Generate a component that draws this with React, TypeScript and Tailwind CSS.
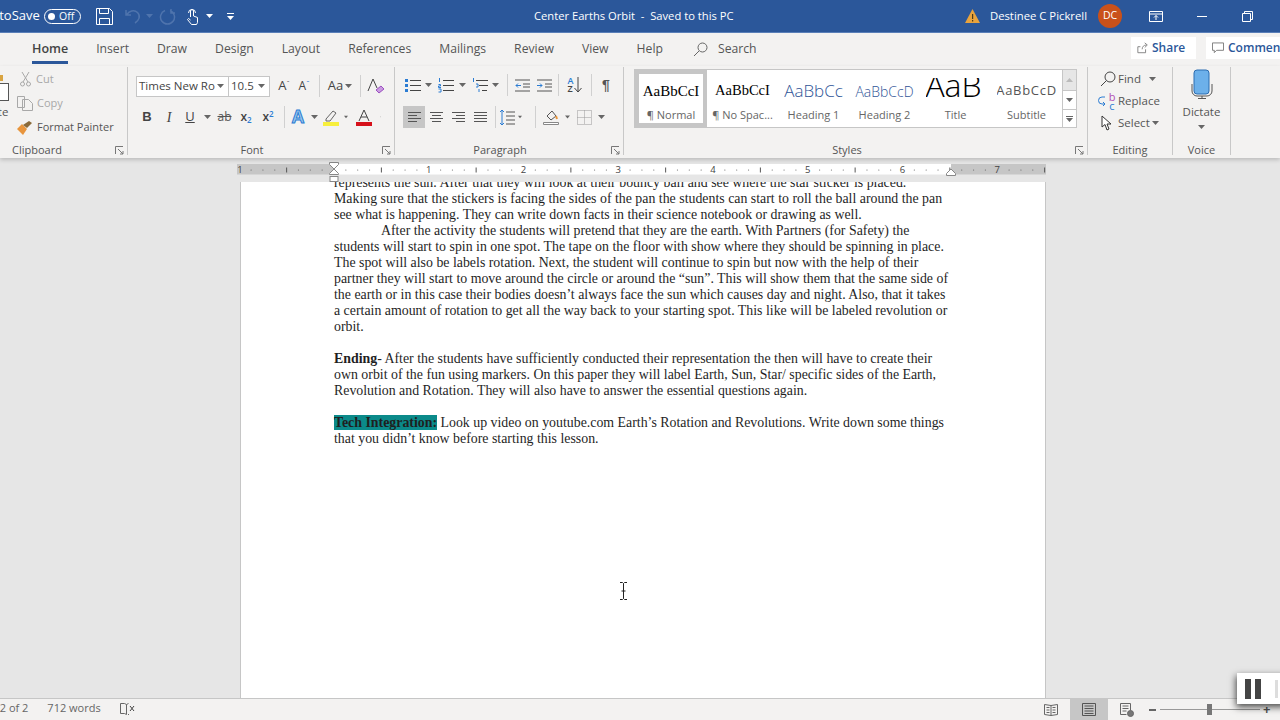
import type { ReactNode } from "react";

const ui = "font-['Open_Sans','Noto_Sans',sans-serif]";

const Caret = ({ className = "text-[#666]" }: { className?: string }) => (
  <svg width="7" height="4" viewBox="0 0 7 4" className={className}>
    <path d="M0 0h7L3.5 4z" fill="currentColor" />
  </svg>
);

const Launcher = () => (
  <svg width="9" height="9" viewBox="0 0 9 9" fill="none" stroke="#777">
    <path d="M.5 8V.5H8" />
    <path d="M3 3l5 5M8 5v3H5" />
  </svg>
);

const Divider = () => <div className="w-px h-[88px] bg-[#c8c8c8] shrink-0" />;
const Sep = () => <div className="w-px h-[22px] bg-[#d0d0d0] shrink-0" />;

const Cell = ({ w, children, active }: { w: number; children?: ReactNode; active?: boolean }) => (
  <div
    className={`h-[22px] flex items-center justify-center shrink-0 ${active ? "bg-[#c6c6c6]" : ""}`}
    style={{ width: w }}
  >
    {children}
  </div>
);

const GroupLabel = ({ label, launcher, pr = 0 }: { label: string; launcher?: boolean; pr?: number }) => (
  <div
    className="relative h-[18px] flex items-center justify-center text-[11px] text-[#555]"
    style={{ paddingRight: pr }}
  >
    {label}
    {launcher && (
      <span className="absolute right-[3px] top-[5px] flex">
        <Launcher />
      </span>
    )}
  </div>
);

const Lines = ({ d, color = "#555" }: { d: string; color?: string }) => (
  <svg width="15" height="14" viewBox="0 0 15 14" fill="none" stroke={color}>
    <path d={d} />
  </svg>
);

const BulletIcon = () => (
  <svg width="16" height="15" viewBox="0 0 16 15" fill="none">
    <path d="M5 2.5h11M5 7.5h11M5 12.5h11" stroke="#444" />
    <path d="M0 1h3v3H0zM0 6h3v3H0zM0 11h3v3H0z" fill="#2b7cd3" />
  </svg>
);
const NumberIcon = () => (
  <svg width="16" height="15" viewBox="0 0 16 15" fill="none">
    <path d="M5 2.5h11M5 7.5h11M5 12.5h11" stroke="#444" />
    <path d="M1.5 0v4M.5 6.5h2V8h-2v1.5H3M.5 11H3v3H.5" stroke="#2b7cd3" />
  </svg>
);
const MultiIcon = () => (
  <svg width="16" height="15" viewBox="0 0 16 15" fill="none">
    <path d="M4 2.5h12M7 7.5h9M10 12.5h5" stroke="#444" />
    <path d="M1.5 0v4M4 6h2v3H4M7 11v3" stroke="#2b7cd3" />
  </svg>
);
const IndentIcon = ({ out }: { out?: boolean }) => (
  <svg width="15" height="13" viewBox="0 0 15 13" fill="none">
    <path d="M0 1h15M8 5h7M8 8h7M0 12h15" stroke="#555" />
    <path d={out ? "M6 6.5H1M3 4.5l-2 2 2 2" : "M0 6.5h5M3 4.5l2 2-2 2"} stroke="#2b7cd3" />
  </svg>
);

const titleLeft = (
  <div className="flex items-center">
    <span className="ml-[-17px] w-[54px] text-[13px] text-white whitespace-nowrap">AutoSave</span>
    <div className="ml-[7px] w-[37px] h-[15px] rounded-full border border-white flex items-center">
      <span className="ml-[3px] w-[7px] h-[7px] rounded-full bg-white" />
      <span className="ml-[4px] text-[10.5px] leading-none text-white">Off</span>
    </div>
    <svg width="17" height="17" viewBox="0 0 17 17" fill="none" stroke="white" className="ml-[15px]">
      <path d="M.5.5h13l3 3v13H.5z" />
      <path d="M3.5.5v5h9v-5M3.5 16.5v-6h10v6" />
    </svg>
    <svg width="16" height="15" viewBox="0 0 16 15" fill="none" stroke="#4f74ad" strokeWidth="1.5" className="ml-[12px]">
      <path d="M1 1v5h5M1.5 6C4 2 9 0 12.5 3.5s1.500 8-2.500 10.500" />
    </svg>
    <span className="ml-[5px] flex"><Caret className="text-[#4f74ad]" /></span>
    <svg width="17" height="17" viewBox="0 0 17 17" fill="none" stroke="#4f74ad" strokeWidth="1.5" className="ml-[6px]">
      <path d="M6 2.5a7 7 0 1 0 5 0M12 1v4h4" />
    </svg>
    <svg width="13" height="17" viewBox="0 0 13 17" fill="none" stroke="white" className="ml-[10px]">
      <path d="M4.5 9V3a1.500 1.500 0 0 1 3 0v5l4 1.500v5l-1 2h-5l-4-5 1-1 2 1.500" />
      <path d="M2.5 5a3.500 3.500 0 0 1 7 0" />
    </svg>
    <span className="ml-[7px] flex"><Caret className="text-white" /></span>
    <svg width="7" height="7" viewBox="0 0 7 7" className="ml-[14px]">
      <path d="M0 0h7v1H0zM0 3h7L3.5 7z" fill="white" />
    </svg>
  </div>
);

const TitleBar = () => (
  <div className="h-[33px] bg-[#2b579a] border-b border-[#5a7fb8] flex items-center relative shrink-0 overflow-hidden">
    {titleLeft}
    <span className="absolute left-[534px] top-[10px] text-[11.2px] leading-none text-white whitespace-pre">
      Center Earths Orbit  -  Saved to this PC
    </span>
    <div className="ml-auto flex items-center mr-[27px]">
      <svg width="15" height="14" viewBox="0 0 15 14">
        <path d="M7.5 0L15 14H0z" fill="#e8a33d" />
        <path d="M7 5h1.200v5H7zM7 11h1.200v1.500H7z" fill="#4a3a1a" />
      </svg>
      <span className="ml-[10px] text-[11.3px] text-white whitespace-nowrap">Destinee C Pickrell</span>
      <span className="ml-[11px] w-[24px] h-[24px] rounded-full bg-[#c9511a] text-[10.5px] text-white flex items-center justify-center">
        DC
      </span>
      <svg width="14" height="11" viewBox="0 0 14 11" fill="none" stroke="white" className="ml-[27px]">
        <path d="M.5.5h13v10H.5zM.5 3h13M7 9V4.500M5 6.500l2-2 2 2" />
      </svg>
      <span className="ml-[34px] w-[10px] h-px bg-white" />
      <svg width="11" height="11" viewBox="0 0 11 11" fill="none" stroke="white" className="ml-[35px]">
        <path d="M.5 2.500h8v8h-8zM2.500 2.500v-2h8v8h-2" />
      </svg>
    </div>
  </div>
);

const tabs = ["Insert", "Draw", "Design", "Layout", "References", "Mailings", "Review", "View", "Help"];

const TabRow = () => (
  <div className="h-[33px] flex items-center pl-[32px] gap-[28px] text-[12.2px] text-[#555] relative shrink-0">
    <div className="relative h-full flex items-center font-semibold text-[12.5px] text-[#444]">
      Home
      <span className="absolute left-0 right-0 bottom-[2px] h-[3px] bg-[#2b579a]" />
    </div>
    {tabs.map((t) => (
      <span key={t}>{t}</span>
    ))}
    <div className="flex items-center ml-[2px]">
      <svg width="15" height="15" viewBox="0 0 15 15" fill="none" stroke="#666">
        <circle cx="9.5" cy="5.5" r="4.5" />
        <path d="M6 9l-5 5" />
      </svg>
      <span className="ml-[10px]">Search</span>
    </div>
    <div className="absolute left-[1131px] top-[4px] w-[65px] h-[22px] bg-white flex items-center pl-[6px] gap-[3px] text-[12px] text-[#2b579a] font-semibold">
      <svg width="12" height="12" viewBox="0 0 14 13" fill="none" stroke="#777">
        <path d="M1 5v7h9V8M1 5h3M6 8c0-3 2-5 5-5M9 .5L12 3 9 6" />
      </svg>
      Share
    </div>
    <div className="absolute left-[1206px] top-[4px] w-[90px] h-[22px] bg-white flex items-center pl-[6px] gap-[4px] text-[12px] text-[#2b579a] font-semibold whitespace-nowrap">
      <svg width="12" height="12" viewBox="0 0 13 12" fill="none" stroke="#777">
        <path d="M.5.5h12v8H5L2.500 11V8.500h-2z" />
      </svg>
      Comments
    </div>
  </div>
);

const Clipboard = () => (
  <div className="w-[127px] shrink-0 flex flex-col relative">
    <div className="h-[70px] text-[11px] relative">
      <div className="absolute left-[-4px] top-[17px] w-[13px] h-[18px] bg-white border border-[#555]" />
      <span className="absolute left-[-5px] top-[9px] w-[8px] h-[6px] bg-[#d9a441]" />
      <span className="absolute left-[-21px] top-[37px] text-[11.5px] text-[#555]">Paste</span>
      <div className="pl-[20px] pt-[2px] flex flex-col gap-[2px]">
        <div className="h-[22px] flex items-center text-[#a8a8a8]">
          <svg width="11" height="15" viewBox="0 0 11 15" fill="none" stroke="#a8a8a8">
            <path d="M2 0l6 10M9 0L3 10" />
            <circle cx="2.5" cy="12" r="2" />
            <circle cx="8.5" cy="12" r="2" />
          </svg>
          <span className="ml-[5px]">Cut</span>
        </div>
        <div className="h-[22px] flex items-center text-[#a8a8a8] ml-[-3px]">
          <svg width="16" height="15" viewBox="0 0 16 15" fill="none" stroke="#a8a8a8">
            <path d="M.5.5h7v11h-7zM5.500 3.500h6l4 4v7h-10z" />
          </svg>
          <span className="ml-[4px]">Copy</span>
        </div>
        <div className="h-[22px] flex items-center text-[#555] ml-[-3px]">
          <svg width="16" height="15" viewBox="0 0 16 15">
            <path d="M0 9l5-5 5 5-4 6z" fill="#e8953d" />
            <path d="M6 5l6-4 3 2-5 5z" fill="#8a6a3a" />
          </svg>
          <span className="ml-[4px]">Format Painter</span>
        </div>
      </div>
    </div>
    <div className="mt-[5px]">
      <GroupLabel label="Clipboard" launcher pr={53} />
    </div>
  </div>
);

const FontGroup = () => (
  <div className="w-[266px] shrink-0 flex flex-col">
    <div className="h-[75px] pl-[8px] pt-[9px] flex flex-col gap-[9px]">
      <div className="flex items-center h-[22px]">
        <div className="w-[93px] h-[21px] bg-white border border-[#c6c6c6] flex items-center pl-[2px] pr-[4px] justify-between text-[11.5px] text-[#444] whitespace-nowrap overflow-hidden">
          Times New Ro
          <Caret />
        </div>
        <div className="w-[42px] h-[21px] ml-[-1px] bg-white border border-[#c6c6c6] flex items-center pl-[2px] pr-[4px] justify-between text-[11.5px] text-[#444]">
          10.5
          <Caret />
        </div>
        <div className="w-[4px]" />
        <Cell w={20}>
          <span className="text-[13px] text-[#444]">A<sup className="text-[8px] text-[#666]">ˆ</sup></span>
        </Cell>
        <Cell w={20}>
          <span className="text-[12px] text-[#444]">A<sup className="text-[8px] text-[#2b7cd3]">ˇ</sup></span>
        </Cell>
        <div className="w-[5px]" />
        <Sep />
        <div className="w-[40px] flex items-center justify-center gap-[2px] text-[13px] text-[#444]">
          Aa
          <Caret />
        </div>
        <Sep />
        <Cell w={30}>
          <svg width="18" height="17" viewBox="0 0 18 17" fill="none">
            <path d="M1 13L6 1l4 9" stroke="#444" />
            <path d="M9 12l5-4 3 3-5 4z" fill="#c99be0" stroke="#9b4fc0" />
          </svg>
        </Cell>
      </div>
      <div className="flex items-center h-[22px] text-[#444]">
        <Cell w={22}>
          <span className="font-['Liberation_Sans',sans-serif] font-bold text-[13px]">B</span>
        </Cell>
        <Cell w={22}>
          <span className="font-['Liberation_Serif',serif] italic text-[14px]">I</span>
        </Cell>
        <Cell w={20}>
          <span className="underline text-[13px]">U</span>
        </Cell>
        <Cell w={14}><Caret /></Cell>
        <Cell w={21}>
          <span className="line-through text-[12px] text-[#555]">ab</span>
        </Cell>
        <Cell w={22}>
          <span className="font-semibold text-[12px]">x<sub className="text-[8px] text-[#2b7cd3]">2</sub></span>
        </Cell>
        <Cell w={22}>
          <span className="font-semibold text-[12px]">x<sup className="text-[8px] text-[#2b7cd3]">2</sup></span>
        </Cell>
        <div className="w-[5px]" />
        <Sep />
        <Cell w={26}>
          <span className="font-['Liberation_Sans',sans-serif] font-bold text-[18px] text-[#9cc9ee] [-webkit-text-stroke:1px_#2b7cd3]">A</span>
        </Cell>
        <Cell w={7}><Caret /></Cell>
        <Cell w={26}>
          <svg width="16" height="17" viewBox="0 0 16 17" fill="none">
            <path d="M3 10l7-8 3 2-6 8H3z" stroke="#666" />
            <rect x="0" y="13" width="16" height="4" fill="#f7ef3c" />
          </svg>
        </Cell>
        <Cell w={4}><Caret /></Cell>
        <Cell w={32}>
          <svg width="16" height="17" viewBox="0 0 16 17" fill="none">
            <path d="M3 12L8 1l5 11M5 8h6" stroke="#444" />
            <rect x="0" y="13" width="16" height="4" fill="#d6111b" />
          </svg>
        </Cell>
        <Cell w={1}><Caret /></Cell>
      </div>
    </div>
    <div>
      <GroupLabel label="Font" launcher pr={18} />
    </div>
  </div>
);

const ParagraphGroup = () => (
  <div className="w-[228px] shrink-0 flex flex-col">
    <div className="h-[75px] flex flex-col">
      <div className="flex items-center h-[22px] mt-[8px] pl-[9px]">
        <Cell w={17}><BulletIcon /></Cell>
        <Cell w={15}><Caret /></Cell>
        <Cell w={19}><NumberIcon /></Cell>
        <Cell w={15}><Caret /></Cell>
        <Cell w={19}><MultiIcon /></Cell>
        <Cell w={13}><Caret /></Cell>
        <div className="w-[5px]" />
        <Sep />
        <Cell w={28}><IndentIcon out /></Cell>
        <Cell w={16}><IndentIcon /></Cell>
        <div className="w-[6px]" />
        <Sep />
        <Cell w={32}>
          <span className="flex items-center">
            <span className="flex flex-col text-[9px] leading-[8px] font-semibold">
              <span className="text-[#2b7cd3]">A</span>
              <span className="text-[#444]">Z</span>
            </span>
            <svg width="8" height="16" viewBox="0 0 8 16" fill="none" stroke="#444" className="ml-[1px]">
              <path d="M4 0v15M.5 11L4 15l3.500-4" />
            </svg>
          </span>
        </Cell>
        <Sep />
        <Cell w={28}>
          <span className="font-['Liberation_Sans',sans-serif] font-bold text-[14px] text-[#555]">¶</span>
        </Cell>
      </div>
      <div className="flex items-center h-[22px] mt-[10px] pl-[8px]">
        <Cell w={22} active><Lines d="M1 2.5h13M1 5.500h9M1 8.500h13M1 11.500h9" /></Cell>
        <Cell w={22}><Lines d="M1 2.5h13M3 5.500h9M1 8.500h13M3 11.500h9" /></Cell>
        <Cell w={22}><Lines d="M1 2.5h13M5 5.500h9M1 8.500h13M5 11.500h9" /></Cell>
        <Cell w={22}><Lines d="M1 2.5h13M1 5.500h13M1 8.500h13M1 11.500h13" /></Cell>
        <div className="w-[4px]" />
        <Sep />
        <Cell w={22}>
          <svg width="16" height="15" viewBox="0 0 16 15" fill="none">
            <path d="M7 2h9M7 6h9M7 10h9M7 14h9" stroke="#555" />
            <path d="M3 0v15M1 2l2-2 2 2M1 13l2 2 2-2" stroke="#2b7cd3" />
          </svg>
        </Cell>
        <Cell w={4}><Caret /></Cell>
        <div className="w-[13px]" />
        <Sep />
        <Cell w={29}>
          <svg width="16" height="16" viewBox="0 0 16 16" fill="none">
            <path d="M4 7l5-5 4 5-5 4z" stroke="#555" />
            <path d="M13 7l1 3" stroke="#e8953d" strokeWidth="2" />
            <path d="M.5 13.500h15v2H.5z" stroke="#888" fill="#fff" />
          </svg>
        </Cell>
        <Cell w={5}><Caret /></Cell>
        <div className="w-[1px]" />
        <Cell w={27}>
          <svg width="15" height="15" viewBox="0 0 15 15" fill="none" stroke="#999" strokeDasharray="1 1">
            <path d="M.5.5h14v14H.5zM7.500.5v14M.5 7.500h14" />
          </svg>
        </Cell>
        <Cell w={7}><Caret /></Cell>
      </div>
    </div>
    <div>
      <GroupLabel label="Paragraph" launcher pr={18} />
    </div>
  </div>
);

const styleItems = [
  { name: "¶ No Spac...", sample: "AaBbCcI", box: "h-[30px] mt-[6px] items-center", cls: "font-['Liberation_Serif',serif] text-[14.5px] text-black" },
  { name: "Heading 1", sample: "AaBbCc", box: "h-[30px] mt-[6px] items-center", cls: "text-[17px] font-light text-[#2f5597]" },
  { name: "Heading 2", sample: "AaBbCcD", box: "h-[30px] mt-[6px] items-center", cls: "text-[14px] font-light text-[#2f5597]" },
  { name: "Title", sample: "AaB", box: "h-[22px] mt-[8px] mb-[6px] items-end pr-[4px]", cls: "text-[32px] font-light leading-[30px] text-black" },
  { name: "Subtitle", sample: "AaBbCcD", box: "h-[30px] mt-[6px] items-center", cls: "text-[13px] tracking-[0.7px] text-[#555]" },
];

const StylesGroup = () => (
  <div className="w-[463px] shrink-0 flex flex-col">
    <div className="h-[75px] pt-[3px] pl-[10px]">
      <div className="w-[443px] h-[59px] bg-white border border-[#c6c6c6] flex">
        <div className="w-[72px] h-full border-[4px] border-[#c6c6c6] flex flex-col items-center shrink-0">
          <div className="h-[30px] mt-[2px] flex items-center font-['Liberation_Serif',serif] text-[15px] text-black">AaBbCcI</div>
          <div className="text-[11px] text-[#666] mt-[1px]">¶ Normal</div>
        </div>
        {styleItems.map((s) => (
          <div key={s.name} className="w-[71px] shrink-0 flex flex-col items-center overflow-hidden">
            <div className={`w-[60px] flex justify-center whitespace-nowrap overflow-hidden ${s.box} ${s.cls}`}>
              {s.sample}
            </div>
            <div className="text-[11px] text-[#666] mt-[1px] whitespace-nowrap">{s.name}</div>
          </div>
        ))}
        <div className="ml-auto w-[14px] border-l border-[#c6c6c6] flex flex-col shrink-0">
          <div className="h-[20px] bg-[#e6e6e6] flex items-center justify-center">
            <Caret className="text-[#bbb] rotate-180" />
          </div>
          <div className="h-[19px] border-t border-[#c6c6c6] flex items-center justify-center">
            <Caret />
          </div>
          <div className="flex-1 border-t border-[#c6c6c6] flex flex-col items-center justify-center gap-[1px]">
            <span className="w-[7px] h-px bg-[#666]" />
            <Caret />
          </div>
        </div>
      </div>
    </div>
    <div>
      <GroupLabel label="Styles" launcher pr={17} />
    </div>
  </div>
);

const EditingGroup = () => (
  <div className="w-[84px] shrink-0 flex flex-col">
    <div className="h-[75px] pl-[12px] pt-[2px] text-[11.5px] text-[#555] flex flex-col">
      <div className="h-[22px] flex items-center">
        <svg width="16" height="16" viewBox="0 0 16 16" fill="none" stroke="#444">
          <circle cx="10" cy="6" r="5" />
          <path d="M6.5 9.500L1 15" />
        </svg>
        <span className="ml-[2px]">Find</span>
        <span className="ml-[8px] flex"><Caret /></span>
      </div>
      <div className="h-[22px] flex items-center ml-[-2px]">
        <svg width="8" height="14" viewBox="0 0 8 14" fill="none" stroke="#2b7cd3">
          <path d="M7 3H4a3 3 0 0 0 0 7h3M5 8l2 2-2 2" />
        </svg>
        <span className="w-[12px] text-[11px] leading-[9px] flex flex-col items-center">
          <span className="text-[#b14fb5]">b</span>
          <span className="text-[#2b7cd3]">c</span>
        </span>
        <span>Replace</span>
      </div>
      <div className="h-[22px] flex items-center">
        <svg width="12" height="16" viewBox="0 0 12 16" fill="white" stroke="#333" className="ml-[1px]">
          <path d="M1 1v11l3-2.500L6 15l2-1-2-5h4z" />
        </svg>
        <span className="ml-[5px]">Select</span>
        <span className="ml-[2px] flex"><Caret /></span>
      </div>
    </div>
    <GroupLabel label="Editing" />
  </div>
);

const VoiceGroup = () => (
  <div className="w-[57px] shrink-0 flex flex-col items-center">
    <div className="h-[75px] flex flex-col items-center">
      <svg width="22" height="30" viewBox="0 0 22 30" className="mt-[3px]" fill="none">
        <rect x="3" y="1" width="15" height="24" rx="3" fill="#6cb0ea" stroke="#2b6cb0" />
        <path d="M1 15v7a5 5 0 0 0 5 5h10a5 5 0 0 0 5-5v-7M11 27v2M7 29.500h8" stroke="#555" />
      </svg>
      <span className="text-[11.5px] text-[#555] mt-[5px] leading-[16px]">Dictate</span>
      <span className="mt-[5px] flex"><Caret /></span>
    </div>
    <GroupLabel label="Voice" />
  </div>
);

const Ribbon = () => (
  <div className="h-[92px] relative z-10 shrink-0 shadow-[0_2px_4px_rgba(0,0,0,0.18)] bg-[#f3f2f1] flex items-start">
    <Clipboard />
    <div className="mt-[1px]"><Divider /></div>
    <FontGroup />
    <div className="mt-[1px]"><Divider /></div>
    <ParagraphGroup />
    <div className="mt-[1px]"><Divider /></div>
    <StylesGroup />
    <div className="mt-[1px]"><Divider /></div>
    <EditingGroup />
    <div className="mt-[1px]"><Divider /></div>
    <VoiceGroup />
    <div className="mt-[1px]"><Divider /></div>
  </div>
);

const RulerTicks = () => {
  const inch = 94.75;
  const origin = 334;
  const marks: ReactNode[] = [];
  for (let i = -1; i <= 7; i++) {
    for (let q = 1; q <= 7; q++) {
      const x = origin + i * inch + (q * inch) / 8;
      if (x < 238 || x > 1046) continue;
      marks.push(
        q === 4 ? (
          <path key={`${i}-${q}`} d={`M${x} 4v5`} stroke="#555" />
        ) : (
          <circle key={`${i}-${q}`} cx={x} cy={6.5} r={0.6} fill="#666" />
        ),
      );
    }
  }
  return <>{marks}</>;
};

const Ruler = () => (
  <div className="h-[24px] bg-[#e6e6e6] shrink-0 relative">
    <svg width="1280" height="24" viewBox="0 0 1280 24" className="block">
      <rect x="237" y="6" width="97" height="10.5" fill="#c6c6c6" />
      <rect x="334" y="6" width="617" height="10.5" fill="#fff" />
      <rect x="951" y="6" width="95" height="10.5" fill="#c6c6c6" />
      <g transform="translate(0 5.5)">
        <RulerTicks />
      </g>
      {[
        ["1", 240],
        ["1", 428.7],
        ["2", 523.5],
        ["3", 618.2],
        ["4", 713],
        ["5", 807.7],
        ["6", 902.5],
        ["7", 997.2],
      ].map(([n, x]) => (
        <text key={`${n}-${x}`} x={x} y="15" fontSize="9.5" textAnchor="middle" fill="#444" fontFamily="Open Sans">
          {n}
        </text>
      ))}
      <path d="M329.500 4.500h9v2L334 11l-4.500-4.500z" fill="#fff" stroke="#888" />
      <path d="M334 11l4.500 4.500v1h-9v-1z" fill="#fff" stroke="#888" />
      <rect x="330" y="18.500" width="8" height="5" fill="#fff" stroke="#888" />
      <path d="M951 11l4.500 4.500v2h-9v-2z" fill="#fff" stroke="#888" />
    </svg>
  </div>
);

const blocks: { text: ReactNode; cls?: string }[] = [
  { text: "represents the sun. After that they will look at their bouncy ball and see where the star sticker is placed." },
  { text: "Making sure that the stickers is facing the sides of the pan the students can start to roll the ball around the pan" },
  { text: "see what is happening. They can write down facts in their science notebook or drawing as well." },
  { text: "After the activity the students will pretend that they are the earth. With Partners (for Safety) the", cls: "pl-[47px]" },
  { text: "students will start to spin in one spot. The tape on the floor with show where they should be spinning in place." },
  { text: "The spot will also be labels rotation. Next, the student will continue to spin but now with the help of their" },
  { text: "partner they will start to move around the circle or around the “sun”. This will show them that the same side of" },
  { text: "the earth or in this case their bodies doesn’t always face the sun which causes day and night. Also, that it takes" },
  { text: "a certain amount of rotation to get all the way back to your starting spot. This like will be labeled revolution or" },
  { text: "orbit." },
  { text: "\u00a0" },
  { text: <><b>Ending</b>- After the students have sufficiently conducted their representation the then will have to create their</> },
  { text: "own orbit of the fun using markers. On this paper they will label Earth, Sun, Star/ specific sides of the Earth," },
  { text: "Revolution and Rotation. They will also have to answer the essential questions again." },
  { text: "\u00a0" },
  { text: <><b className="bg-[#0b8a8a]">Tech Integration:</b> Look up video on youtube.com Earth’s Rotation and Revolutions. Write down some things</> },
  { text: "that you didn’t know before starting this lesson." },
];

const Page = () => (
  <div className="flex-1 min-h-0 bg-[#e6e6e6] relative overflow-hidden">
    <div className="ml-[240px] w-[806px] h-full bg-white border-x border-[#c6c6c6] pl-[93px] overflow-hidden">
      <div className="mt-[-7px] font-['Liberation_Serif',serif] text-[13.87px] leading-[16px] text-[#1f1f1f] whitespace-nowrap">
        {blocks.map((b, i) => (
          <div key={i} className={b.cls}>
            {b.text}
          </div>
        ))}
      </div>
    </div>
    {/* i-beam pointer */}
    <svg width="9" height="18" viewBox="0 0 9 18" fill="none" stroke="#222" className="absolute left-[619px] top-[400px]">
      <path d="M1 .5h2.500L4.500 1.500 5.500.5H8M4.500 1.500v15M1 17.500h2.500l1-1 1 1H8M2.500 9h4" />
    </svg>
  </div>
);

const StatusBar = () => (
  <div className="h-[22px] bg-[#f3f2f1] border-t border-[#c6c6c6] shrink-0 flex items-center text-[11px] text-[#666] relative z-10">
    <div className="flex items-center pb-[2px]">
      <span className="ml-[-28px] whitespace-nowrap">Page 2 of 2</span>
      <span className="ml-[19px]">712 words</span>
      <svg width="15" height="14" viewBox="0 0 15 14" fill="none" stroke="#666" className="ml-[19px]">
        <path d="M.5 1.500h4l2 1v10l-2-1h-4zM6.500 2.500l2-1M8 12.500h1" />
        <path d="M10 4l4 5M14 4l-4 5" stroke="#444" />
      </svg>
    </div>
    <div className="ml-auto flex items-center h-full">
      <svg width="14" height="13" viewBox="0 0 14 13" fill="none" stroke="#666">
        <path d="M.5 1.500L7 2.500l6.500-1v10L7 12.500l-6.500-1zM7 2.500v10M2.500 4.500h3M2.500 7h3M2.500 9.500h3M8.500 4.500h3M8.500 7h3M8.500 9.500h3" />
      </svg>
      <div className="ml-[12px] w-[38px] h-full bg-[#c6c6c6] flex items-center justify-center">
        <svg width="14" height="13" viewBox="0 0 14 13" fill="none" stroke="#555">
          <path d="M.5.5h13v12H.5zM2.500 3h9M2.500 5.500h9M2.500 8h9M2.500 10.500h9" />
        </svg>
      </div>
      <svg width="14" height="14" viewBox="0 0 14 14" fill="none" stroke="#666" className="ml-[12px]">
        <path d="M.5.5h10v7M.5.5v11h6M2.500 3h6M2.500 5.500h6M2.500 8h4" />
        <circle cx="10.5" cy="10.5" r="3" fill="#777" />
      </svg>
      <span className="ml-[15px] w-[7px] h-[2px] bg-[#666]" />
      <div className="ml-[4px] w-[100px] h-px bg-[#999] relative">
        <span className="absolute left-[47px] top-[-5px] w-[5px] h-[11px] bg-[#777]" />
      </div>
      <span className="ml-[3px] w-[7px] text-[13px] font-bold text-[#555] leading-none">+</span>
      <div className="w-[10px]" />
    </div>
  </div>
);

const PauseOverlay = () => (
  <div className="absolute left-[1237px] top-[673px] w-[50px] h-[31px] bg-white shadow-[-1px_3px_7px_rgba(0,0,0,0.7)] flex items-center pl-[8px] gap-[4px] z-20">
    <span className="w-[6px] h-[20px] bg-[#444]" />
    <span className="w-[6px] h-[20px] bg-[#444]" />
    <span className="ml-[10px] w-[3px] h-[18px] bg-[#ddd]" />
  </div>
);

export default function App() {
  return (
    <div className={`w-[1280px] h-[720px] relative overflow-hidden flex flex-col bg-[#f3f2f1] ${ui}`}>
      <TitleBar />
      <TabRow />
      <Ribbon />
      <Ruler />
      <Page />
      <StatusBar />
      <PauseOverlay />
    </div>
  );
}
